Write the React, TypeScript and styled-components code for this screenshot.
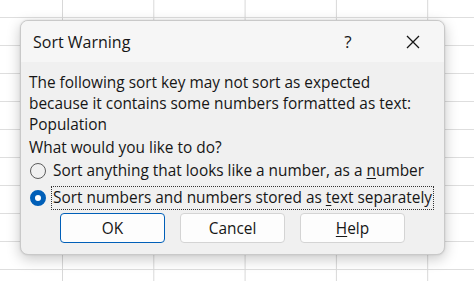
import React from 'react';
import styled, { createGlobalStyle } from 'styled-components';

const TEXT = '#161616';
const ACCENT = '#005fb8';

const GlobalStyle = createGlobalStyle`
  html, body {
    margin: 0;
    padding: 0;
  }
  body {
    font-family: 'Open Sans', 'Noto Sans', sans-serif;
    color: ${TEXT};
  }
`;

// spreadsheet grid behind the dialog
const Sheet = styled.div`
  width: 474px;
  height: 281px;
  box-sizing: border-box;
  padding: 20px 0 0 20px;
  overflow: hidden;
  background-color: #ffffff;
  background-image:
    linear-gradient(to right, #d8d8d8 1px, transparent 1px),
    linear-gradient(to bottom, #dedede 1px, transparent 1px);
  background-size: 91.3px 28px;
  background-position: 62px 17px;
`;

const Dialog = styled.div`
  width: 425px;
  height: 235px;
  box-sizing: border-box;
  border: 1px solid #c9c9c9;
  border-radius: 8px;
  background: #f0f0f0;
  box-shadow: 0 4px 14px rgba(0, 0, 0, 0.22), 0 0 2px rgba(0, 0, 0, 0.12);
  display: flex;
  flex-direction: column;
  overflow: hidden;
`;

const TitleBar = styled.div`
  height: 41px;
  flex: none;
  display: flex;
  align-items: center;
  padding-left: 12px;
  background: #f6f6f6;
`;

const Title = styled.span`
  flex: 1;
  font-size: 16px;
`;

const TitleButton = styled.button<{ wide?: boolean }>`
  width: ${p => (p.wide ? 62 : 68)}px;
  height: 41px;
  border: none;
  background: none;
  padding: 0;
  display: flex;
  align-items: center;
  justify-content: center;
  font-family: inherit;
  font-size: 17px;
  font-weight: 500;
  color: ${TEXT};
`;

const Body = styled.div`
  padding: 10px 0 0 8px;
  display: flex;
  flex-direction: column;
  font-size: 15.4px;
  font-weight: 500;
  line-height: 21px;
`;

const Line = styled.div<{ gap?: number }>`
  margin-top: ${p => p.gap ?? 0}px;
  white-space: nowrap;
`;

const Option = styled.label<{ gap?: number }>`
  display: flex;
  align-items: center;
  height: 24px;
  margin-top: ${p => p.gap ?? 0}px;
  white-space: nowrap;
`;

const Radio = styled.span<{ checked?: boolean }>`
  width: 16px;
  height: 16px;
  box-sizing: border-box;
  border-radius: 50%;
  flex: none;
  margin: 0 6px 0 1px;
  border: ${p => (p.checked ? `5px solid ${ACCENT}` : '1.5px solid #5c5c5c')};
  background: ${p => (p.checked ? '#ffffff' : 'transparent')};
`;

const OptionText = styled.span<{ focused?: boolean }>`
  padding: 0 1px;
  outline: ${p => (p.focused ? '1px dotted #333' : 'none')};
  outline-offset: 0;
  line-height: 22px;
`;

const Key = styled.span`
  text-decoration: underline;
  text-underline-offset: 2px;
`;

const ButtonRow = styled.div`
  display: flex;
  gap: 15px;
  margin: 3px 0 0 31px;
`;

const Button = styled.button<{ primary?: boolean }>`
  width: 105px;
  height: 30px;
  box-sizing: border-box;
  border-radius: 4px;
  background: #fdfdfd;
  border: ${p => (p.primary ? `1.5px solid ${ACCENT}` : '1px solid #d4d4d4')};
  font-family: inherit;
  font-size: 15.4px;
  font-weight: 500;
  color: ${TEXT};
  padding: 0;
`;

const CloseIcon = () => (
  <svg width="14" height="14" viewBox="0 0 14 14">
    <path d="M1 1 L13 13 M13 1 L1 13" stroke={TEXT} strokeWidth="1.3" fill="none" />
  </svg>
);

export default function App() {
  return (
    <>
      <GlobalStyle />
      <Sheet>
        <Dialog>
          <TitleBar>
            <Title>Sort Warning</Title>
            <TitleButton>?</TitleButton>
            <TitleButton wide>
              <CloseIcon />
            </TitleButton>
          </TitleBar>
          <Body>
            <Line>The following sort key may not sort as expected</Line>
            <Line>because it contains some numbers formatted as text:</Line>
            <Line>Population</Line>
            <Line gap={2}>What would you like to do?</Line>
            <Option gap={1}>
              <Radio />
              <OptionText>
                Sort anything that looks like a number, as a <Key>n</Key>umber
              </OptionText>
            </Option>
            <Option gap={3}>
              <Radio checked />
              <OptionText focused>
                Sort numbers and numbers stored as <Key>t</Key>ext separately
              </OptionText>
            </Option>
            <ButtonRow>
              <Button primary>OK</Button>
              <Button>Cancel</Button>
              <Button>
                <Key>H</Key>elp
              </Button>
            </ButtonRow>
          </Body>
        </Dialog>
      </Sheet>
    </>
  );
}
